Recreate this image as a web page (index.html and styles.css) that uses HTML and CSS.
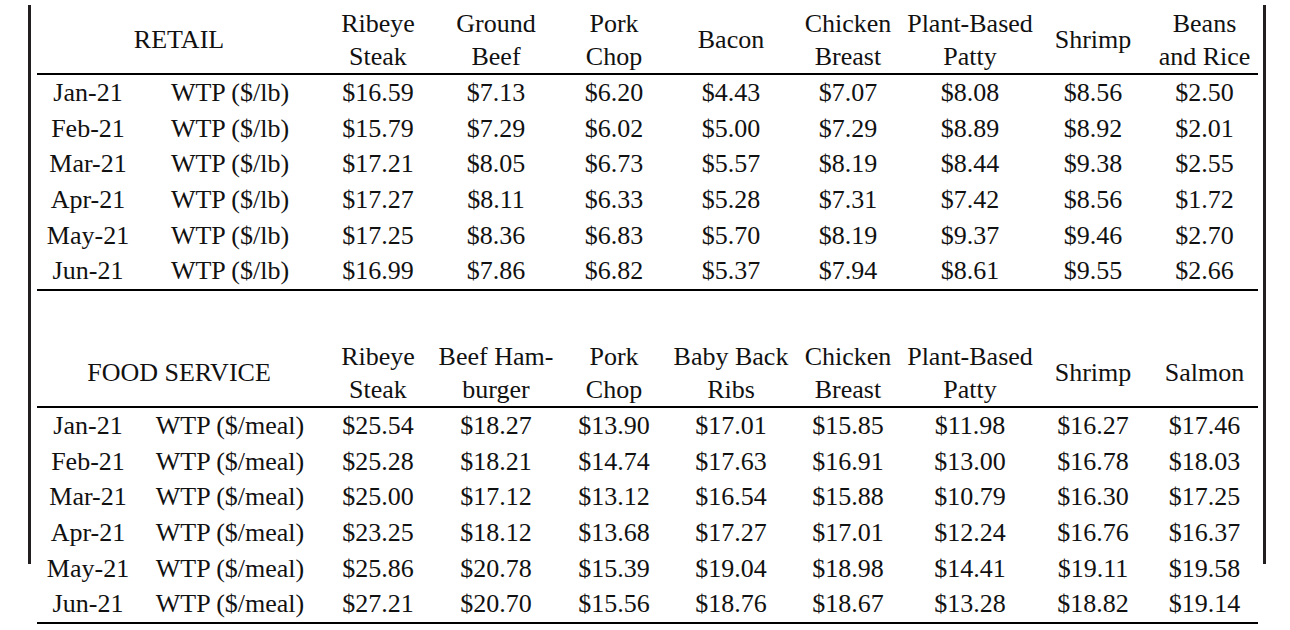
FILE: index.html
```html
<!DOCTYPE html>
<html lang="en">
<head>
<meta charset="utf-8">
<title>WTP Retail and Food Service</title>
<link rel="stylesheet" href="styles.css">
</head>
<body>
<div class="page">
  <table class="wtp">
    <colgroup>
      <col class="c-date"><col class="c-unit"><col class="c1"><col class="c2"><col class="c3"><col class="c4"><col class="c5"><col class="c6"><col class="c7"><col class="c8">
    </colgroup>
    <thead>
      <tr>
        <th colspan="2">RETAIL</th>
        <th>Ribeye<br>Steak</th>
        <th>Ground<br>Beef</th>
        <th>Pork<br>Chop</th>
        <th>Bacon</th>
        <th>Chicken<br>Breast</th>
        <th>Plant-Based<br>Patty</th>
        <th>Shrimp</th>
        <th>Beans<br>and Rice</th>
      </tr>
    </thead>
    <tbody>
      <tr><td>Jan-21</td><td>WTP ($/lb)</td><td>$16.59</td><td>$7.13</td><td>$6.20</td><td>$4.43</td><td>$7.07</td><td>$8.08</td><td>$8.56</td><td>$2.50</td></tr>
      <tr><td>Feb-21</td><td>WTP ($/lb)</td><td>$15.79</td><td>$7.29</td><td>$6.02</td><td>$5.00</td><td>$7.29</td><td>$8.89</td><td>$8.92</td><td>$2.01</td></tr>
      <tr><td>Mar-21</td><td>WTP ($/lb)</td><td>$17.21</td><td>$8.05</td><td>$6.73</td><td>$5.57</td><td>$8.19</td><td>$8.44</td><td>$9.38</td><td>$2.55</td></tr>
      <tr><td>Apr-21</td><td>WTP ($/lb)</td><td>$17.27</td><td>$8.11</td><td>$6.33</td><td>$5.28</td><td>$7.31</td><td>$7.42</td><td>$8.56</td><td>$1.72</td></tr>
      <tr><td>May-21</td><td>WTP ($/lb)</td><td>$17.25</td><td>$8.36</td><td>$6.83</td><td>$5.70</td><td>$8.19</td><td>$9.37</td><td>$9.46</td><td>$2.70</td></tr>
      <tr class="last"><td>Jun-21</td><td>WTP ($/lb)</td><td>$16.99</td><td>$7.86</td><td>$6.82</td><td>$5.37</td><td>$7.94</td><td>$8.61</td><td>$9.55</td><td>$2.66</td></tr>
    </tbody>
  </table>

  <table class="wtp second">
    <colgroup>
      <col class="c-date"><col class="c-unit"><col class="c1"><col class="c2"><col class="c3"><col class="c4"><col class="c5"><col class="c6"><col class="c7"><col class="c8">
    </colgroup>
    <thead>
      <tr>
        <th colspan="2">FOOD SERVICE</th>
        <th>Ribeye<br>Steak</th>
        <th>Beef Ham-<br>burger</th>
        <th>Pork<br>Chop</th>
        <th>Baby Back<br>Ribs</th>
        <th>Chicken<br>Breast</th>
        <th>Plant-Based<br>Patty</th>
        <th>Shrimp</th>
        <th>Salmon</th>
      </tr>
    </thead>
    <tbody>
      <tr><td>Jan-21</td><td>WTP ($/meal)</td><td>$25.54</td><td>$18.27</td><td>$13.90</td><td>$17.01</td><td>$15.85</td><td>$11.98</td><td>$16.27</td><td>$17.46</td></tr>
      <tr><td>Feb-21</td><td>WTP ($/meal)</td><td>$25.28</td><td>$18.21</td><td>$14.74</td><td>$17.63</td><td>$16.91</td><td>$13.00</td><td>$16.78</td><td>$18.03</td></tr>
      <tr><td>Mar-21</td><td>WTP ($/meal)</td><td>$25.00</td><td>$17.12</td><td>$13.12</td><td>$16.54</td><td>$15.88</td><td>$10.79</td><td>$16.30</td><td>$17.25</td></tr>
      <tr><td>Apr-21</td><td>WTP ($/meal)</td><td>$23.25</td><td>$18.12</td><td>$13.68</td><td>$17.27</td><td>$17.01</td><td>$12.24</td><td>$16.76</td><td>$16.37</td></tr>
      <tr><td>May-21</td><td>WTP ($/meal)</td><td>$25.86</td><td>$20.78</td><td>$15.39</td><td>$19.04</td><td>$18.98</td><td>$14.41</td><td>$19.11</td><td>$19.58</td></tr>
      <tr class="last"><td>Jun-21</td><td>WTP ($/meal)</td><td>$27.21</td><td>$20.70</td><td>$15.56</td><td>$18.76</td><td>$18.67</td><td>$13.28</td><td>$18.82</td><td>$19.14</td></tr>
    </tbody>
  </table>
</div>
</body>
</html>
```

FILE: styles.css
```css
html, body {
  margin: 0;
  padding: 0;
  background: #ffffff;
}

body {
  font-family: "Liberation Serif", "Times New Roman", serif;
  font-size: 26px;
  color: #111111;
}

.page {
  position: relative;
  width: 1290px;
  height: 630px;
  padding: 8px 0 0 37px;
  box-sizing: border-box;
  overflow: hidden;
}

/* frame bars at the sides of the figure */
.page::before,
.page::after {
  content: "";
  position: absolute;
  top: 5px;
  height: 559px;
  width: 3px;
  background: #231f20;
}

.page::before {
  left: 28px;
}

.page::after {
  left: 1263px;
}

.wtp {
  width: 1221px;
  table-layout: fixed;
  border-collapse: separate;
  border-spacing: 0;
}

.wtp.second {
  margin-top: 50px;
}

.c-date { width: 102px; }
.c-unit { width: 182px; }
.c1 { width: 114px; }
.c2 { width: 122px; }
.c3 { width: 114px; }
.c4 { width: 120px; }
.c5 { width: 114px; }
.c6 { width: 130px; }
.c7 { width: 116px; }
.c8 { width: 107px; }

.wtp th,
.wtp td {
  padding: 0;
  text-align: center;
  white-space: nowrap;
  font-weight: normal;
  vertical-align: middle;
}

.wtp th {
  height: 65px;
  line-height: 32.5px;
  border-bottom: 2px solid #000000;
}

.wtp td {
  height: 35.67px;
  line-height: 35.67px;
}

.wtp tr.last td {
  border-bottom: 2px solid #000000;
}
```
